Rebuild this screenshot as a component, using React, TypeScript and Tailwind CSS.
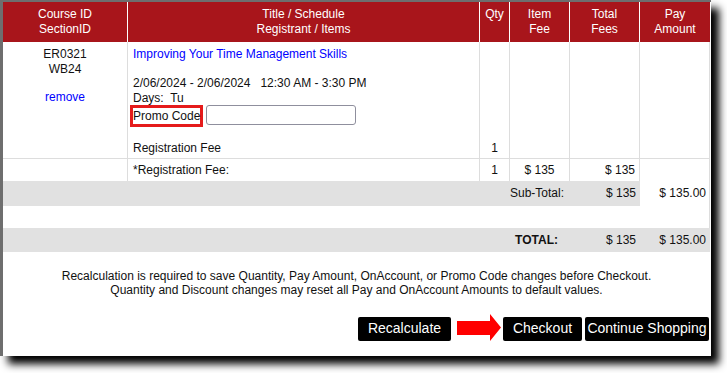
import React from 'react';

const cols = 'grid grid-cols-[125px_352px_30px_60px_70px_70px]';

function CartTable() {
  return (
    <div className="w-[707px]">
      {/* Header */}
      <div className={`${cols} h-[40px] bg-[#a8151b] text-white text-center leading-[15px]`}>
        <div className="flex items-center justify-center border-r border-white">
          <div>
            Course ID
            <br />
            SectionID
          </div>
        </div>
        <div className="flex items-center justify-center border-r border-white">
          <div>
            Title / Schedule
            <br />
            Registrant / Items
          </div>
        </div>
        <div className="pt-[5px] border-r border-white">Qty</div>
        <div className="flex items-center justify-center border-r border-white">
          <div>
            Item
            <br />
            Fee
          </div>
        </div>
        <div className="flex items-center justify-center border-r border-white">
          <div>
            Total
            <br />
            Fees
          </div>
        </div>
        <div className="flex items-center justify-center">
          <div>
            Pay
            <br />
            Amount
          </div>
        </div>
      </div>

      {/* Course row */}
      <div className={`${cols} h-[117px] border-b border-[#dddddd]`}>
        <div className="pt-[5px] text-center border-r border-[#dddddd]">
          <div>ER0321</div>
          <div>WB24</div>
          <div className="h-[14px]" />
          <a href="#" className="text-[#0000ff]">
            remove
          </a>
        </div>
        <div className="pt-[5px] pl-[5px] border-r border-[#dddddd]">
          <a href="#" className="text-[#0000ff]">
            Improving Your Time Management Skills
          </a>
          <div className="h-[14.5px]" />
          <div className="whitespace-pre">2/06/2024 - 2/06/2024   12:30 AM - 3:30 PM</div>
          <div className="whitespace-pre">Days:  Tu</div>
          <div className="flex items-start gap-[3px]">
            <div className="-ml-[3px] h-[22px] flex items-center border-[3px] border-[#e51b1b] whitespace-nowrap">
              Promo Code
            </div>
            <input
              type="text"
              className="w-[150px] h-[20px] border border-[#8f8f9d] rounded-[3px] px-1 outline-none"
            />
          </div>
          <div className="mt-[14px]">Registration Fee</div>
        </div>
        <div className="flex flex-col justify-end items-center pb-[3px] border-r border-[#dddddd]">1</div>
        <div className="border-r border-[#dddddd]" />
        <div className="border-r border-[#dddddd]" />
        <div className="border-r border-[#dddddd]" />
      </div>

      {/* Fee row */}
      <div className={`${cols} h-[22px] items-stretch`}>
        <div className="border-r border-[#dddddd]" />
        <div className="flex items-center pl-[5px] border-r border-[#dddddd]">*Registration Fee:</div>
        <div className="flex items-center justify-center border-r border-[#dddddd]">1</div>
        <div className="flex items-center justify-center border-r border-[#dddddd]">$ 135</div>
        <div className="flex items-center justify-end pr-[4px] border-r border-[#dddddd]">$ 135</div>
        <div className="border-r border-[#dddddd]" />
      </div>

      {/* Sub-total */}
      <div className={`${cols} h-[25px]`}>
        <div className="col-span-4 flex items-center justify-end pr-[6px] bg-[#e1e1e1]">Sub-Total:</div>
        <div className="flex items-center justify-end pr-[4px] bg-[#e1e1e1]">$ 135</div>
        <div className="flex items-center justify-end pr-[3px] bg-white border-r border-[#dddddd]">$ 135.00</div>
      </div>

      {/* Spacer row */}
      <div className="h-[22px] border-r border-[#dddddd]" />

      {/* Total */}
      <div className={`${cols} h-[24px] bg-[#e1e1e1]`}>
        <div className="col-span-4 flex items-center justify-end pr-[12px] font-bold">TOTAL:</div>
        <div className="flex items-center justify-end pr-[4px]">$ 135</div>
        <div className="flex items-center justify-end pr-[4px]">$ 135.00</div>
      </div>
    </div>
  );
}

export default function App() {
  return (
    <div className="min-h-screen bg-white font-['Liberation_Sans',Arial,sans-serif] text-[12px] leading-[14.5px] text-[#111]">
      <div className="w-[711px] h-[356px] bg-white border-l-[3px] border-t-[2px] border-[#6e6e6e] shadow-[8px_8px_8px_rgba(0,0,0,1)] flex flex-col">
        <CartTable />

        {/* Notice */}
        <div className="w-[707px] mt-[17px] text-center leading-[14px]">
          <p>Recalculation is required to save Quantity, Pay Amount, OnAccount, or Promo Code changes before Checkout.</p>
          <p>Quantity and Discount changes may reset all Pay and OnAccount Amounts to default values.</p>
        </div>

        {/* Actions */}
        <div className="w-[707px] mt-[17px] pr-[1px] flex justify-end items-center text-[14px] text-white">
          <button className="w-[93px] h-[24px] bg-black rounded-[2px]">Recalculate</button>
          <svg width="44" height="27" viewBox="0 0 44 27" className="ml-[6px] mr-[2px] mb-[2px]">
            <polygon points="0,7 33,7 33,0 44,13.5 33,27 33,21 0,21" fill="#ff0000" />
          </svg>
          <button className="w-[79px] h-[24px] bg-black rounded-[2px]">Checkout</button>
          <button className="ml-[3px] w-[124px] h-[24px] bg-black rounded-[2px] whitespace-nowrap">
            Continue Shopping
          </button>
        </div>
      </div>
    </div>
  );
}
